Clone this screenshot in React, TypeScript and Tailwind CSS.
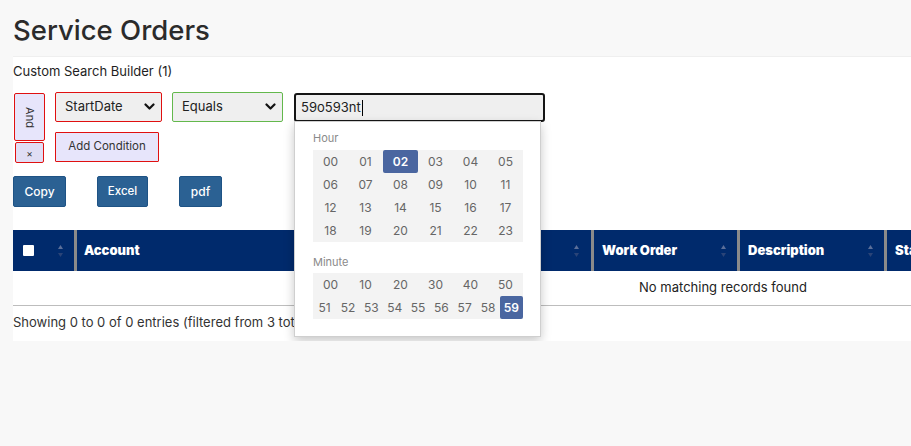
import React from "react";

const F = { fontFamily: "Inter, 'Open Sans', sans-serif" };

function Chevron() {
  return (
    <svg width="11" height="8" viewBox="0 0 11 8" className="shrink-0">
      <path d="M1.5 1.5 L5.5 5.5 L9.5 1.5" fill="none" stroke="#111" strokeWidth="2.2" strokeLinecap="round" strokeLinejoin="round" />
    </svg>
  );
}

function Sort({ dim = false }: { dim?: boolean }) {
  return (
    <svg width="7" height="14" viewBox="0 0 7 14" className="shrink-0">
      <path d="M3.5 1 L6 5 L1 5 Z" fill={dim ? "#5b6f99" : "#7a8bb0"} />
      <path d="M3.5 13 L6 9 L1 9 Z" fill="#2a4478" />
    </svg>
  );
}

const hours = Array.from({ length: 24 }, (_, i) => String(i).padStart(2, "0"));
const mins1 = ["00", "10", "20", "30", "40", "50"];
const mins2 = ["51", "52", "53", "54", "55", "56", "57", "58", "59"];

export default function App() {
  return (
    <div className="w-[911px] h-[446px] bg-[#f8f8f8] overflow-hidden text-[#222]" style={F}>
      <h1 className="h-[56px] pl-[13px] pt-[12px] text-[27.5px] leading-[36px] font-medium text-[#2b2b2b]">
        Service Orders
      </h1>
      <div className="ml-[13px] h-[285px] bg-white relative overflow-hidden border-t border-[#efefef]">
        <div className="pt-[5px] h-[35px] text-[13px] leading-[18px] text-[#1e1e1e]">Custom Search Builder (1)</div>

        <div className="flex">
          <div className="flex flex-col w-[33px] pl-[1px] pt-[1px]">
            <button className="w-[31px] h-[48px] bg-[#e7e5fb] border border-[#e01010] rounded-[2px] flex items-center justify-center">
              <span className="block rotate-90 text-[11px] text-[#333] leading-none">And</span>
            </button>
            <button className="ml-[1px] mt-[1px] w-[29px] h-[21px] bg-[#e0def4] border border-[#e01010] rounded-[2px] flex items-center justify-center text-[10px] text-[#333] leading-none">
              ×
            </button>
          </div>
          <div className="ml-[9px] flex flex-col">
            <div className="flex items-start">
              <div className="w-[107px] h-[30px] bg-[#efefef] border border-[#e01010] rounded-[2px] flex items-center justify-between pl-[9px] pr-[6px] text-[13px] text-[#222]">
                StartDate <Chevron />
              </div>
              <div className="ml-[10px] w-[111px] h-[30px] bg-[#efefef] border border-[#63b84c] rounded-[2px] flex items-center justify-between pl-[9px] pr-[6px] text-[13px] text-[#222]">
                Equals <Chevron />
              </div>
              <div className="ml-[11px] relative">
                <div className="w-[251px] h-[29px] mt-[1px] bg-[#efefef] border-2 border-[#151515] rounded-[3px] flex items-center pl-[5px] text-[13px] text-[#222]">
                  59o593nt<span className="inline-block w-[1px] h-[16px] bg-black ml-[1px]" />
                </div>
                <div className="absolute left-0 top-[29px] w-[247px] h-[216px] bg-white border border-[#cfcfcf] shadow-[0_4px_10px_rgba(0,0,0,0.22)] z-10 pl-[18px] pt-[8px]">
                  <div className="text-[11px] text-[#8a8a8a] h-[20px] leading-[16px]">Hour</div>
                  <div className="w-[210px] bg-[#f3f3f3] grid grid-cols-6">
                    {hours.map((h) => (
                      <div
                        key={h}
                        className={
                          h === "02"
                            ? "h-[23px] flex items-center justify-center text-[12px] bg-[#4a66a0] text-white font-semibold rounded-[2px]"
                            : "h-[23px] flex items-center justify-center text-[12px] text-[#666]"
                        }
                      >
                        {h}
                      </div>
                    ))}
                  </div>
                  <div className="text-[11px] text-[#8a8a8a] h-[31px] pt-[12px] leading-[16px]">Minute</div>
                  <div className="w-[210px] bg-[#f3f3f3]">
                    <div className="grid grid-cols-6">
                      {mins1.map((m) => (
                        <div key={m} className="h-[23px] flex items-center justify-center text-[12px] text-[#666]">{m}</div>
                      ))}
                    </div>
                    <div className="grid grid-cols-9">
                      {mins2.map((m) => (
                        <div
                          key={m}
                          className={
                            m === "59"
                              ? "h-[23px] flex items-center justify-center text-[12px] bg-[#4a66a0] text-white font-semibold rounded-[2px]"
                              : "h-[23px] flex items-center justify-center text-[12px] text-[#666]"
                          }
                        >
                          {m}
                        </div>
                      ))}
                    </div>
                  </div>
                </div>
              </div>
            </div>
            <button className="mt-[10px] w-[104px] h-[30px] bg-[#e7e5fb] border border-[#e01010] rounded-[1px] text-[11.5px] text-[#333]">
              Add Condition
            </button>
          </div>
        </div>

        <div className="flex mt-[13px] h-[31px]">
          <button className="w-[53px] h-[31px] bg-[#2b6193] border border-[#1e5385] rounded-[2px] text-white text-[12px] font-medium">Copy</button>
          <button className="ml-[31px] w-[51px] h-[31px] bg-[#2b6193] border border-[#1e5385] rounded-[2px] text-white text-[11.5px] font-medium">Excel</button>
          <button className="ml-[31px] w-[43px] h-[31px] bg-[#2b6193] border border-[#1e5385] rounded-[2px] text-white text-[12px] font-medium">pdf</button>
        </div>

        <div className="mt-[23px] w-[1420px]">
          <div className="flex h-[41px] bg-[#002a6c] text-white text-[13px] font-black">
            <div className="w-[61px] flex items-center pl-[10px] pr-[10px] justify-between">
              <span className="w-[11px] h-[11px] bg-white rounded-[1px]" />
              <Sort dim />
            </div>
            <div className="w-[517px] border-l-[3px] border-[#8a8a8a] flex items-center justify-between pl-[7px] pr-[11px]">
              Account <Sort dim />
            </div>
            <div className="w-[146px] border-l-[3px] border-[#8a8a8a] flex items-center justify-between pl-[8px] pr-[10px]">
              Work Order <Sort dim />
            </div>
            <div className="w-[147px] border-l-[3px] border-[#8a8a8a] flex items-center justify-between pl-[8px] pr-[10px]">
              Description <Sort dim />
            </div>
            <div className="flex-1 border-l-[3px] border-[#8a8a8a] flex items-center pl-[8px]">Status</div>
          </div>
          <div className="h-[35px] border-b border-[#bdbdbd] flex items-center justify-center text-[13px] text-[#222]">
            No matching records found
          </div>
        </div>
        <div className="pt-[7px] text-[13px] text-[#333]">Showing 0 to 0 of 0 entries (filtered from 3 total entries)</div>
      </div>
    </div>
  );
}
